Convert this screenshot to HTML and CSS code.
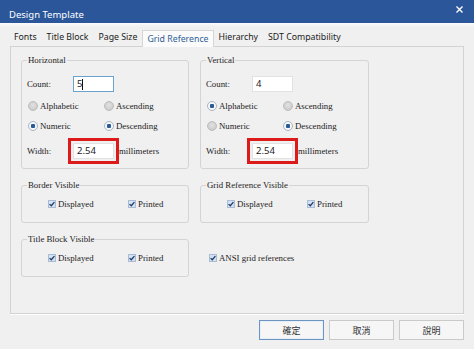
FILE: index.html
```html
<!DOCTYPE html>
<html lang="en">
<head>
<meta charset="utf-8">
<title>Design Template</title>
<link rel="stylesheet" href="styles.css">
</head>
<body>
<div class="dialog">
  <div class="titlebar">
    <span class="title">Design Template</span>
    <span class="close"><svg width="7" height="7" viewBox="0 0 7 7"><path d="M0.5 0.5L6.5 6.5M6.5 0.5L0.5 6.5" stroke="#fff" stroke-width="1.4"/></svg></span>
  </div>
  <div class="body">
    <div class="tabs">
      <span class="tab">Fonts</span>
      <span class="tab">Title Block</span>
      <span class="tab">Page Size</span>
      <span class="tab active">Grid Reference</span>
      <span class="tab">Hierarchy</span>
      <span class="tab">SDT Compatibility</span>
    </div>
    <div class="panel">
      <div class="grid">
        <fieldset class="group">
          <legend>Horizontal</legend>
          <div class="row count"><span class="lbl">Count:</span><span class="input focus">5<span class="caret"></span></span></div>
          <div class="row opts first"><span class="opt"><span class="radio"></span>Alphabetic</span><span class="opt"><span class="radio"></span>Ascending</span></div>
          <div class="row opts"><span class="opt"><span class="radio on"></span>Numeric</span><span class="opt"><span class="radio on"></span>Descending</span></div>
          <div class="row width"><span class="lbl short">Width:</span><span class="mark"><span class="input">2.54</span></span><span class="unit">millimeters</span></div>
        </fieldset>
        <fieldset class="group">
          <legend>Vertical</legend>
          <div class="row count"><span class="lbl">Count:</span><span class="input">4</span></div>
          <div class="row opts first"><span class="opt"><span class="radio on"></span>Alphabetic</span><span class="opt"><span class="radio"></span>Ascending</span></div>
          <div class="row opts"><span class="opt"><span class="radio"></span>Numeric</span><span class="opt"><span class="radio on"></span>Descending</span></div>
          <div class="row width"><span class="lbl short">Width:</span><span class="mark"><span class="input">2.54</span></span><span class="unit">millimeters</span></div>
        </fieldset>
        <fieldset class="group">
          <legend>Border Visible</legend>
          <div class="row checks"><span class="chk-opt"><span class="check"></span>Displayed</span><span class="chk-opt"><span class="check"></span>Printed</span></div>
        </fieldset>
        <fieldset class="group">
          <legend>Grid Reference Visible</legend>
          <div class="row checks"><span class="chk-opt"><span class="check"></span>Displayed</span><span class="chk-opt"><span class="check"></span>Printed</span></div>
        </fieldset>
        <fieldset class="group">
          <legend>Title Block Visible</legend>
          <div class="row checks"><span class="chk-opt"><span class="check"></span>Displayed</span><span class="chk-opt"><span class="check"></span>Printed</span></div>
        </fieldset>
        <div class="ansi">
          <div class="row"><span class="chk-opt wide"><span class="check"></span>ANSI grid references</span></div>
        </div>
      </div>
    </div>
    <div class="buttons">
      <button class="btn default">確定</button>
      <button class="btn">取消</button>
      <button class="btn">說明</button>
    </div>
  </div>
</div>
</body>
</html>
```
FILE: styles.css
```css
* { box-sizing: border-box; }
html, body { margin: 0; padding: 0; }
body {
  width: 474px;
  height: 349px;
  overflow: hidden;
  background: #f0f0f0;
  color: #1c1c1c;
  font-family: "Liberation Serif", serif;
  font-size: 8.8px;
}
.dialog {
  width: 474px;
  height: 349px;
  display: flex;
  flex-direction: column;
  box-shadow: inset 2px 0 0 #f7fafc;
}
.titlebar {
  height: 23px;
  flex: none;
  background: #2b579a;
  color: #fff;
  display: flex;
  justify-content: space-between;
  align-items: flex-start;
  padding: 0 11px 0 9px;
  font-family: "Noto Sans", sans-serif;
  font-size: 9.5px;
}
.title { margin-top: 8px; line-height: 13px; }
.close { margin-top: 6px; line-height: 0; }
.body {
  flex: 1;
  padding: 0 10px;
  background: linear-gradient(#fbfbfb, #f0f0f0 4px);
  display: flex;
  flex-direction: column;
}
.tabs {
  display: flex;
  align-items: flex-end;
  height: 16px;
  margin: 7px 0 0 -1px;
  font-family: "Noto Sans", sans-serif;
  font-size: 8.75px;
  color: #222;
  position: relative;
  z-index: 1;
}
.tab {
  padding: 0 5px;
  line-height: 15px;
  height: 16px;
}
.tab.active {
  padding: 0 4px;
  height: 17px;
  margin-bottom: -1px;
  line-height: 16px;
  background: #fbfbfb;
  border: 1px solid #d6d6d6;
  border-bottom: none;
  color: #2f5f96;
}
.panel {
  height: 268px;
  flex: none;
  border: 1px solid #d3d3d3;
  box-shadow: 0 1px 0 #fdfdfd;
  padding: 7px 0 0 10px;
}
.grid {
  display: grid;
  grid-template-columns: 168px 169px;
  column-gap: 11px;
  row-gap: 10px;
  align-items: start;
}
.group {
  margin: 0;
  min-width: 0;
  padding: 0 5px 4px;
  border: 1px solid #d4d4d4;
  border-radius: 3px;
}
.group legend {
  padding: 0 1px;
  line-height: 12px;
}
.row {
  display: flex;
  align-items: center;
}
.row.count { height: 16px; margin-top: 10px; }
.row.opts { height: 20px; padding-left: 1px; }
.row.opts.first { margin-top: 4px; }
.row.width { height: 26px; margin-top: 2px; }
.lbl { width: 46px; flex: none; }
.lbl.short { width: 41px; }
.input {
  width: 41px;
  height: 16px;
  flex: none;
  background: #fff;
  border: 1px solid #e2e2e2;
  padding-left: 3px;
  font-family: "Noto Sans", sans-serif;
  font-size: 9.5px;
  line-height: 14px;
  color: #222;
  display: flex;
  align-items: center;
}
.input.focus { border-color: #6aa4cc; }
.caret {
  width: 1px;
  height: 11px;
  background: #111;
}
.mark {
  display: flex;
  flex: none;
  border: 3px solid #dc1a1a;
  padding: 2px;
}
.unit { white-space: nowrap; }
.opt {
  display: flex;
  align-items: center;
  width: 76px;
  flex: none;
}
.radio {
  width: 10px;
  height: 10px;
  border-radius: 50%;
  margin-right: 2px;
  background: radial-gradient(circle at 50% 40%, #e2e2e2, #c4c4c4);
  border: 1px solid #bdbdbd;
  flex: none;
}
.radio.on {
  background: radial-gradient(circle, #2c5a94 0 2px, #f4f7fb 2.5px);
  border-color: #aab4c0;
}
.row.checks {
  height: 20px;
  margin-top: 3px;
  padding-left: 21px;
  margin-bottom: 4px;
}
.chk-opt {
  display: flex;
  align-items: center;
  width: 80px;
  flex: none;
}
.chk-opt.wide { width: auto; }
.check {
  width: 8px;
  height: 8px;
  margin-right: 2px;
  flex: none;
  border: 1px solid #a9bcd4;
  background: #d3e1f3 url("data:image/svg+xml;utf8,<svg xmlns='http://www.w3.org/2000/svg' width='6' height='6' viewBox='0 0 6 6'><path d='M0.6 3.1L2.3 4.7L5.4 1.1' fill='none' stroke='%231d3c66' stroke-width='1.3'/></svg>") center / 6px 6px no-repeat;
}
.ansi {
  padding: 15px 0 0 9px;
}
.ansi .row { height: 20px; }
.buttons {
  display: flex;
  justify-content: flex-end;
  gap: 5px;
  margin-top: 6px;
}
.btn {
  width: 65px;
  height: 20px;
  margin: 0;
  padding: 0;
  border: 1px solid #cacaca;
  background: #f6f6f6;
  font-family: "Noto Sans CJK TC", "Noto Sans", sans-serif;
  font-size: 9px;
  color: #333;
}
.btn.default {
  border-color: #6d95c2;
  box-shadow: inset 0 0 0 1px #e6eef7;
}
```
